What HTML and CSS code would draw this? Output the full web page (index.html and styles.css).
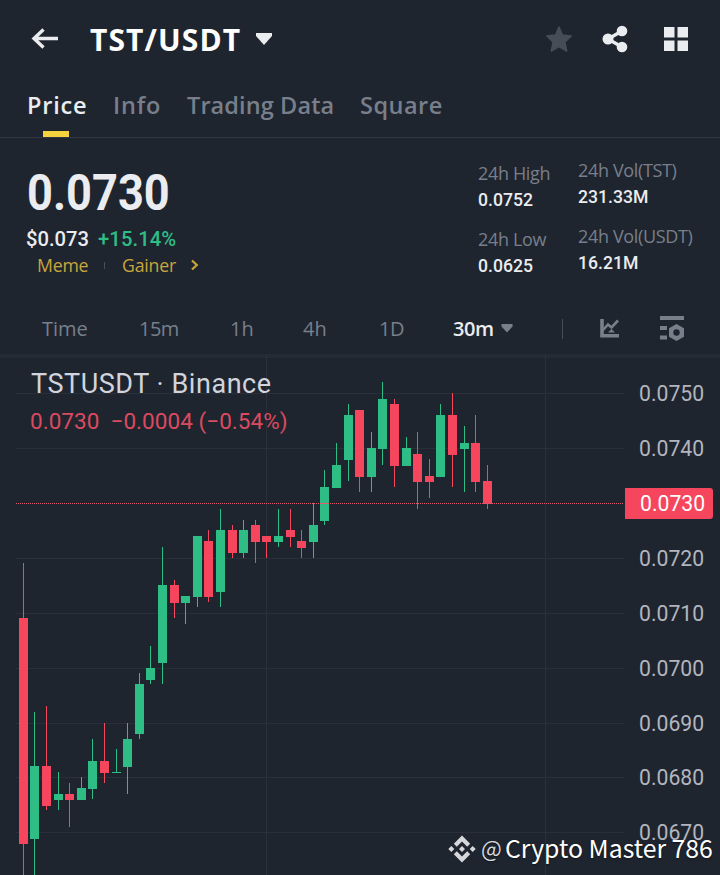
FILE: index.html
```html
<!DOCTYPE html>
<html lang="en">
<head>
  <meta charset="UTF-8">
  <meta name="viewport" content="width=device-width, initial-scale=1.0">
  <title>TST/USDT</title>
  <link rel="stylesheet" href="styles.css">
</head>
<body>
  <header class="topbar">
    <svg class="back" width="28" height="22" viewBox="0 0 28 22" fill="none" stroke="#eaecef" stroke-width="3.4">
      <path d="M27 10.500H3M12.500 1.500L3 10.500L12.500 19.500"/>
    </svg>
    <h1>TST/USDT</h1>
    <svg class="caret" width="18" height="14" viewBox="0 0 18 14"><path d="M1 1h16v3L9 13L1 4z" fill="#eaecef"/></svg>
    <svg class="star" width="28" height="28" viewBox="0 0 28 28"><path d="M14 2l3.500 8 8.700 1-6.300 6 1.800 9L14 21.600 6.300 26l1.800-9-6.300-6 8.700-1z" fill="#474d57" stroke="#474d57" stroke-width="1.500" stroke-linejoin="round"/></svg>
    <svg class="share" width="28" height="28" viewBox="0 0 28 28" fill="#eaecef">
      <path d="M21 6L7 14l14 8" fill="none" stroke="#eaecef" stroke-width="3.400"/>
      <circle cx="7" cy="14" r="5.500"/><circle cx="21" cy="6" r="5.300"/><circle cx="21" cy="22" r="5.300"/>
    </svg>
    <svg class="grid" width="24" height="24" viewBox="0 0 24 24" fill="#eaecef">
      <path d="M0 0h10.500v10.500H0zM13.500 0H24v10.500H13.500zM0 13.500h10.500V24H0zM13.500 13.500H24V24H13.500z"/>
    </svg>
  </header>

  <nav class="tabs">
    <a class="tab active">Price</a>
    <a class="tab info">Info</a>
    <a class="tab trading">Trading Data</a>
    <a class="tab square">Square</a>
  </nav>

  <section class="summary">
    <div class="quote">
      <div class="last">0.0730</div>
      <div class="fiat"><span class="usd">$0.073</span><span class="up">+15.14%</span></div>
      <div class="tags">
        <span class="meme">Meme</span><i class="split"></i><span class="gainer">Gainer</span>
        <svg width="8" height="12" viewBox="0 0 8 12" fill="none" stroke="#c9a53c" stroke-width="2.200"><path d="M1 1.500L5.800 6L1 10.500"/></svg>
      </div>
    </div>
    <dl class="stats">
      <dt>24h High</dt><dd>0.0752</dd>
      <dt>24h Low</dt><dd>0.0625</dd>
    </dl>
    <dl class="stats volume">
      <dt>24h Vol(TST)</dt><dd>231.33M</dd>
      <dt>24h Vol(USDT)</dt><dd>16.21M</dd>
    </dl>
  </section>

  <div class="intervals">
    <span class="i-time">Time</span>
    <span class="i-15m">15m</span>
    <span class="i-1h">1h</span>
    <span class="i-4h">4h</span>
    <span class="i-1d">1D</span>
    <span class="i-30m">30m</span>
    <svg class="i-caret" width="12" height="10" viewBox="0 0 12 10"><path d="M.5 0h11v2.500L6 8.500L.5 2.500z" fill="#787f8b"/></svg>
    <i class="bar"></i>
    <svg class="i-chart" width="20" height="20" viewBox="0 0 20 20" fill="none" stroke="#787f8b">
      <path d="M2 0v16.700H19" stroke-width="3.600"/>
      <path d="M3 11L8 5.500L11.500 8.500L18 1.500" stroke-width="2.600"/>
      <path d="M8 13.500l3.500-3.500L15 13.500z" fill="#787f8b" stroke="none"/>
    </svg>
    <svg class="i-set" width="26" height="26" viewBox="0 0 26 26" fill="#787f8b">
      <path d="M1 0h24v4H1zM1 10h7v4H1zM1 19.500h7v4H1z"/>
      <path fill-rule="evenodd" d="M17.500 8l7.500 4.300v8.400L17.500 25 10 20.700v-8.400zM17.500 13.300a3.200 3.200 0 1 0 0 6.400 3.200 3.200 0 1 0 0-6.400z"/>
    </svg>
  </div>

  <main class="chart">
    <svg id="candles" width="720" height="521" viewBox="0 354 720 521"></svg>
    <div class="legend">
      <div class="symbol">TSTUSDT · Binance</div>
      <div class="change"><span>0.0730</span><span class="diff">−0.0004 (−0.54%)</span></div>
    </div>
    <div class="axis" id="axis"></div>
    <div class="signature">
      <svg width="28" height="28" viewBox="0 0 28 28" fill="#d5d7da">
        <path d="M14 .5l8.200 8.200-3 3L14 6.500l-5.200 5.200-3-3zM14 27.500l8.200-8.200-3-3L14 21.500l-5.200-5.200-3 3zM14 11l3 3-3 3-3-3zM3.300 11l3 3-3 3-3-3zM24.700 11l3 3-3 3-3-3z"/>
      </svg>
      <span class="at">@</span><span class="author">Crypto Master 786</span>
    </div>
  </main>

  <script src="chart.js"></script>
</body>
</html>
```

FILE: styles.css
```css
body {
  margin: 0;
  width: 720px;
  height: 875px;
  overflow: hidden;
  background-color: #1f252f;
  color: #eaecef;
  font-family: "Open Sans", "Noto Sans", sans-serif;
}
svg {
  display: block;
  flex: none;
}
span, a, h1 {
  white-space: nowrap;
}

/* header */
.topbar {
  display: flex;
  align-items: center;
  height: 78px;
  padding-left: 31px;
}
.topbar h1 {
  margin: 0 0 0 31px;
  width: 165px;
  font-size: 30px;
  font-weight: 700;
  color: #fff;
  letter-spacing: 1.1px;
}
.star {
  margin-left: 272px;
}
.share {
  margin-left: 28px;
}
.grid {
  margin-left: 35px;
}

/* tabs */
.tabs {
  display: flex;
  height: 59px;
  padding-left: 27px;
  border-bottom: 1px solid #313741;
}
.tab {
  position: relative;
  padding-top: 10px;
  font-size: 23.500px;
  line-height: 34px;
  font-weight: 600;
  color: #787f8b;
  letter-spacing: .1px;
}
.tab.active {
  width: 86px;
  color: #eaecef;
  letter-spacing: .8px;
}
.tab.active::after {
  content: "";
  position: absolute;
  left: 16px;
  bottom: 0;
  width: 26px;
  height: 6px;
  background-color: #f5d33f;
}
.tab.info {
  width: 74px;
  letter-spacing: .8px;
}
.tab.trading {
  width: 173px;
}
.tab.square {
  letter-spacing: .5px;
}

/* price and 24h numbers */
.summary {
  display: flex;
  height: 165px;
  padding-left: 27px;
}
.quote {
  width: 451px;
}
.last {
  margin-top: 27px;
  font: 700 50.500px/56px Roboto, sans-serif;
  transform: scaleX(.895);
  transform-origin: left;
}
.fiat {
  display: flex;
  margin: 4px 0 0 -1px;
  font: 500 20.200px/28px Roboto, sans-serif;
}
.usd {
  width: 72px;
}
.up {
  color: #2ebd85;
  letter-spacing: .1px;
}
.tags {
  display: flex;
  align-items: center;
  height: 24px;
  padding-left: 10px;
  font-size: 17.700px;
  letter-spacing: -.2px;
  color: #c9a53c;
}
.meme {
  width: 67px;
}
.split {
  width: 1px;
  height: 7px;
  margin-right: 17px;
  background-color: #474d57;
}
.gainer {
  width: 69px;
}
.stats {
  width: 100px;
  margin: 22px 0 0;
}
.stats.volume {
  width: 130px;
  margin-top: 19px;
}
.stats dt {
  font-size: 18px;
  line-height: 26px;
  letter-spacing: -.35px;
  color: #787f8b;
}
.stats dd {
  margin: 1px 0 13px;
  font: 500 17.600px/26px Roboto, sans-serif;
}

/* intervals */
.intervals {
  display: flex;
  align-items: center;
  height: 51px;
  padding-left: 42px;
  border-bottom: 4px solid #252b35;
  font-size: 20px;
  color: #787f8b;
}
.i-time {
  width: 97px;
}
.i-15m {
  width: 91px;
  letter-spacing: -.5px;
}
.i-1h {
  width: 73px;
}
.i-4h {
  width: 76px;
}
.i-1d {
  width: 74px;
  letter-spacing: -.5px;
}
.i-30m {
  width: 48px;
  color: #eaecef;
  font-weight: 600;
  letter-spacing: -.4px;
}
.bar {
  width: 1px;
  height: 20px;
  margin: 0 37px 0 49px;
  background-color: #474d57;
}
.i-set {
  margin-left: 39px;
}

/* chart */
.chart {
  position: relative;
  height: 521px;
  margin-top: -4px;
  font-family: Roboto, sans-serif;
}
.legend {
  position: absolute;
  left: 31px;
  top: 14px;
}
.symbol {
  font-size: 27px;
  line-height: 32px;
  letter-spacing: .55px;
  color: #d1d4dc;
}
.change {
  display: flex;
  margin: 6px 0 0 -1px;
  font-size: 22.500px;
  line-height: 30px;
  letter-spacing: .05px;
  color: #dc4a60;
}
.diff {
  margin-left: 11px;
}
.axis span {
  position: absolute;
  left: 639px;
  font-size: 21.200px;
  line-height: 30px;
  color: #b2b5be;
}
.axis .now {
  left: 625px;
  width: 73px;
  padding-left: 15px;
  border-radius: 0 3px 3px 0;
  line-height: 31px;
  background-color: #f6465d;
  color: #fff;
}
.signature {
  position: absolute;
  left: 448px;
  top: 477px;
  display: flex;
  align-items: center;
  height: 36px;
  font-family: "Noto Sans CJK SC", sans-serif;
  font-size: 24.800px;
  line-height: 32px;
  color: #fff;
  text-shadow: 0 1px 2px #0008;
}
.at, .author {
  padding-bottom: 4px;
}
.at {
  margin-left: 5px;
  width: 24px;
  font-size: 22px;
  color: #d5d7da;
}
```

FILE: chart.js
```js
// x, body top, body bottom, wick top, wick bottom, up
const candles = [
  [19, 618, 844, 563, 875, 0], [30, 766, 839, 712, 875, 1], [42, 766, 806, 706, 810, 0],
  [54, 794, 800, 772, 810, 1], [65, 794, 800, 783, 827, 0], [77, 788, 800, 777, 800, 1],
  [88, 761, 789, 739, 799, 1], [100, 761, 773, 723, 783, 0], [112, 772, 773, 749, 773, 1],
  [123, 739, 767, 723, 794, 1], [135, 684, 734, 673, 739, 1], [146, 668, 680, 646, 684, 1],
  [158, 585, 663, 547, 684, 1], [170, 585, 603, 580, 618, 0], [181, 596, 603, 596, 624, 1],
  [193, 536, 597, 536, 607, 1], [204, 541, 597, 530, 602, 0], [216, 530, 592, 509, 607, 1],
  [228, 530, 553, 525, 558, 0], [239, 530, 553, 520, 558, 1], [251, 525, 542, 520, 563, 0],
  [262, 536, 542, 536, 558, 0], [274, 536, 542, 509, 547, 1], [286, 530, 537, 509, 547, 0],
  [297, 541, 548, 530, 558, 0], [309, 525, 542, 503, 558, 1], [320, 487, 521, 470, 525, 1],
  [332, 465, 488, 443, 488, 1], [344, 415, 460, 404, 481, 1], [355, 410, 477, 410, 492, 0],
  [367, 448, 477, 432, 492, 1], [378, 399, 449, 382, 465, 1], [390, 404, 466, 399, 487, 0],
  [402, 448, 466, 437, 466, 1], [413, 454, 482, 432, 509, 0], [425, 476, 482, 459, 498, 0],
  [436, 415, 477, 404, 477, 1], [448, 415, 455, 393, 487, 0], [460, 443, 449, 426, 492, 1],
  [471, 443, 482, 415, 492, 0], [483, 481, 504, 465, 509, 0]
];
const levels = { "0.0750": 393, "0.0740": 448, "0.0730": 503, "0.0720": 558, "0.0710": 613,
  "0.0700": 668, "0.0690": 723, "0.0680": 777, "0.0670": 832 };

let svg = "";
let labels = "";
const rect = (x, y, w, h, color) => `<rect x="${x}" y="${y}" width="${w}" height="${h}" fill="${color}"/>`;

for (const price in levels) {
  const y = levels[price];
  const now = price === "0.0730";
  if (!now) svg += rect(16, y, 608, 1, "#2a303a");
  labels += `<span class="${now ? "now" : ""}" style="top:${y - 354 - (now ? 15 : 14)}px">${price}</span>`;
}
svg += rect(266, 354, 1, 521, "#2a303a") + rect(545, 354, 1, 521, "#2a303a");

candles.forEach(([x, top, bottom, high, low, up]) => {
  const color = up ? "#2ebd85" : "#f6465d";
  svg += rect(x + 4, high, 1, low - high, color) + rect(x, top, 9, bottom - top, color);
});
svg += '<path d="M16 503.5H624" stroke="#e0566a" stroke-dasharray="1 1"/>';

document.getElementById("candles").innerHTML = svg;
document.getElementById("axis").innerHTML = labels;
```
